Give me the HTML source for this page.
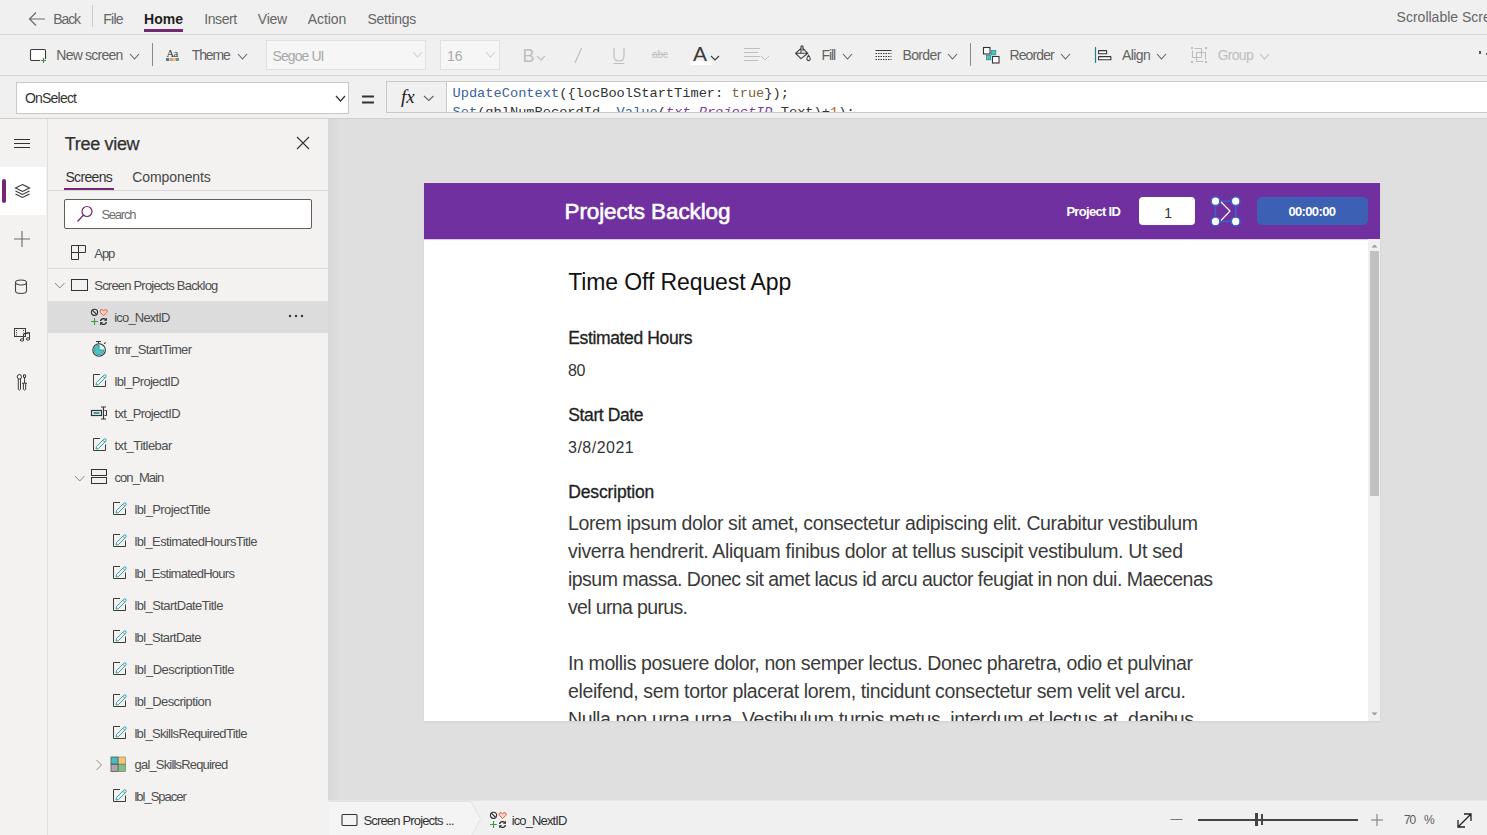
<!DOCTYPE html><html><head><meta charset="utf-8"><style>
html,body{margin:0;padding:0;width:1487px;height:835px;overflow:hidden;background:#f0f0f0;font-family:'Liberation Sans',sans-serif;}
</style></head><body><div style="position:absolute;left:0px;top:0px;width:1487px;height:34px;background:#f0f0f0;"></div>
<div style="position:absolute;left:0px;top:34px;width:1487px;height:1px;background:#d9d9d9;"></div>
<svg style="position:absolute;left:28px;top:11px;" width="18" height="16" viewBox="0 0 18 16"><path d="M1.5,8 H17 M8,1.5 L1.5,8 L8,14.5" fill="none" stroke="#6b6b6b" stroke-width="1.2"/></svg>
<div style="position:absolute;left:53.30px;top:12.30px;font-family:'Liberation Sans', sans-serif;font-size:14px;line-height:14px;color:#666666;font-weight:400;white-space:pre;letter-spacing:-1.142px;">Back</div>
<div style="position:absolute;left:92px;top:5px;width:1px;height:22px;background:#c8c8c8;"></div>
<div style="position:absolute;left:103.30px;top:12.30px;font-family:'Liberation Sans', sans-serif;font-size:14px;line-height:14px;color:#666666;font-weight:400;white-space:pre;letter-spacing:-0.788px;">File</div>
<div style="position:absolute;left:144.00px;top:12.30px;font-family:'Liberation Sans', sans-serif;font-size:14px;line-height:14px;color:#1f1f1f;font-weight:700;white-space:pre;letter-spacing:0.031px;">Home</div>
<div style="position:absolute;left:144px;top:29px;width:39px;height:3px;background:#742774;"></div>
<div style="position:absolute;left:204.20px;top:12.30px;font-family:'Liberation Sans', sans-serif;font-size:14px;line-height:14px;color:#666666;font-weight:400;white-space:pre;letter-spacing:-0.403px;">Insert</div>
<div style="position:absolute;left:257.80px;top:12.30px;font-family:'Liberation Sans', sans-serif;font-size:14px;line-height:14px;color:#666666;font-weight:400;white-space:pre;letter-spacing:-0.231px;">View</div>
<div style="position:absolute;left:307.80px;top:12.30px;font-family:'Liberation Sans', sans-serif;font-size:14px;line-height:14px;color:#666666;font-weight:400;white-space:pre;letter-spacing:-0.104px;">Action</div>
<div style="position:absolute;left:367.50px;top:12.30px;font-family:'Liberation Sans', sans-serif;font-size:14px;line-height:14px;color:#666666;font-weight:400;white-space:pre;letter-spacing:-0.256px;">Settings</div>
<div style="position:absolute;left:1396.60px;top:10.10px;font-family:'Liberation Sans', sans-serif;font-size:14px;line-height:14px;color:#666666;font-weight:400;white-space:pre;">Scrollable Screen</div>
<div style="position:absolute;left:0px;top:35px;width:1487px;height:40px;background:#f0f0f0;"></div>
<div style="position:absolute;left:0px;top:75px;width:1487px;height:1px;background:#d6d6d6;"></div>
<svg style="position:absolute;left:29px;top:48px;" width="19" height="17" viewBox="0 0 19 17"><rect x="1.5" y="1.5" width="15" height="11" rx="1.2" fill="#fff" stroke="#3a3a3a" stroke-width="1.1"/><path d="M14.5,9 V16 M11,12.5 H18" stroke="#f0f0f0" stroke-width="3"/><path d="M14.5,10 V15 M12,12.5 H17" stroke="#3d8f4d" stroke-width="1.1"/></svg>
<div style="position:absolute;left:56.30px;top:48.30px;font-family:'Liberation Sans', sans-serif;font-size:14px;line-height:14px;color:#626262;font-weight:400;white-space:pre;letter-spacing:-0.769px;">New screen</div>
<svg style="position:absolute;left:129px;top:53px;" width="11" height="7" viewBox="0 0 11 7"><polyline points="1,1 5.5,6 10,1" fill="none" stroke="#626262" stroke-width="1.1"/></svg>
<div style="position:absolute;left:152px;top:43px;width:1px;height:23px;background:#8a8a8a;"></div>
<svg style="position:absolute;left:165px;top:47px;" width="16" height="16" viewBox="0 0 16 16"><text x="1.5" y="9.6" font-family="Liberation Serif" font-size="10.5" fill="#333" letter-spacing="-0.6">Aa</text><rect x="1" y="11" width="3" height="3" fill="#4a78b0"/><rect x="4.6" y="11" width="3.2" height="3" fill="#e09a50"/><rect x="7.8" y="11" width="3" height="3" fill="#e8c090"/><rect x="10.8" y="11" width="3.2" height="3" fill="#6a9a80"/></svg>
<div style="position:absolute;left:191.80px;top:48.30px;font-family:'Liberation Sans', sans-serif;font-size:14px;line-height:14px;color:#626262;font-weight:400;white-space:pre;letter-spacing:-1.145px;">Theme</div>
<svg style="position:absolute;left:237px;top:53px;" width="11" height="7" viewBox="0 0 11 7"><polyline points="1,1 5.5,6 10,1" fill="none" stroke="#626262" stroke-width="1.1"/></svg>
<div style="position:absolute;left:266px;top:40px;width:160px;height:30px;background:#f6f6f6;box-sizing:border-box;border:1px solid #e0e0e0;"></div>
<div style="position:absolute;left:272.50px;top:49.10px;font-family:'Liberation Sans', sans-serif;font-size:14px;line-height:14px;color:#a8a8a8;font-weight:400;white-space:pre;letter-spacing:-0.911px;">Segoe UI</div>
<svg style="position:absolute;left:412px;top:51px;" width="11" height="7" viewBox="0 0 11 7"><polyline points="1,1 5.5,6 10,1" fill="none" stroke="#d0d0d0" stroke-width="1.1"/></svg>
<div style="position:absolute;left:440px;top:40px;width:60px;height:30px;background:#f6f6f6;box-sizing:border-box;border:1px solid #e0e0e0;"></div>
<div style="position:absolute;left:447.00px;top:49.10px;font-family:'Liberation Sans', sans-serif;font-size:14px;line-height:14px;color:#a8a8a8;font-weight:400;white-space:pre;">16</div>
<svg style="position:absolute;left:485px;top:51px;" width="11" height="7" viewBox="0 0 11 7"><polyline points="1,1 5.5,6 10,1" fill="none" stroke="#d0d0d0" stroke-width="1.1"/></svg>
<div style="position:absolute;left:522.50px;top:46.70px;font-family:'Liberation Sans', sans-serif;font-size:18px;line-height:18px;color:#bfbfbf;font-weight:400;white-space:pre;">B</div>
<svg style="position:absolute;left:535.5px;top:55px;" width="10" height="6" viewBox="0 0 10 6"><polyline points="1,1 5.0,5 9,1" fill="none" stroke="#bfbfbf" stroke-width="1.1"/></svg>
<svg style="position:absolute;left:573px;top:47px;" width="10" height="17" viewBox="0 0 10 17"><path d="M8.5,1 L2,16" stroke="#bfbfbf" stroke-width="1.2"/></svg>
<svg style="position:absolute;left:612px;top:47px;" width="14" height="18" viewBox="0 0 14 18"><path d="M2,1 V9 Q2,14 7,14 Q12,14 12,9 V1 M1.5,16.5 H12.5" fill="none" stroke="#bfbfbf" stroke-width="1.2"/></svg>
<svg style="position:absolute;left:651px;top:48px;" width="18" height="14" viewBox="0 0 18 14"><text x="1" y="10" font-family="Liberation Sans" font-size="10" fill="#bfbfbf">abc</text><path d="M0.5,6.5 H17" stroke="#bfbfbf" stroke-width="1"/></svg>
<div style="position:absolute;left:693.00px;top:43.15px;font-family:'Liberation Sans', sans-serif;font-size:21px;line-height:21px;color:#3a3a3a;font-weight:400;white-space:pre;">A</div>
<div style="position:absolute;left:690px;top:61px;width:22px;height:3.5px;background:#ffffff;"></div>
<svg style="position:absolute;left:710px;top:55px;" width="10" height="6" viewBox="0 0 10 6"><polyline points="1,1 5.0,5 9,1" fill="none" stroke="#3a3a3a" stroke-width="1.1"/></svg>
<svg style="position:absolute;left:743px;top:47px;" width="28" height="16" viewBox="0 0 28 16"><path d="M1,1.5 H17 M1,5.5 H15 M1,9.5 H17 M1,13.5 H15" stroke="#bfbfbf" stroke-width="1"/><polyline points="18,9 22,13 26,9" fill="none" stroke="#bfbfbf" stroke-width="1"/></svg>
<svg style="position:absolute;left:794px;top:44px;" width="20" height="18" viewBox="0 0 20 18"><path d="M7.5,3.8 L1.6,9.3 L7,14.6 L13.8,9.3 L9.2,4.6 M1.6,9.3 H13.8 M7,9.3 V2.6 Q8,0.8 9,2.6 V7" fill="none" stroke="#3a3a3a" stroke-width="1.1" stroke-linejoin="round"/><path d="M14.5,11.2 Q12.6,13.8 12.8,15 Q13.3,16.6 14.6,16.6 Q16,16.5 16.3,15 Q16.4,13.8 14.5,11.2 Z" fill="none" stroke="#3a3a3a" stroke-width="1.1"/></svg>
<div style="position:absolute;left:821.50px;top:48.30px;font-family:'Liberation Sans', sans-serif;font-size:14px;line-height:14px;color:#626262;font-weight:400;white-space:pre;letter-spacing:-1.130px;">Fill</div>
<svg style="position:absolute;left:842px;top:53px;" width="11" height="7" viewBox="0 0 11 7"><polyline points="1,1 5.5,6 10,1" fill="none" stroke="#626262" stroke-width="1.1"/></svg>
<svg style="position:absolute;left:875px;top:49px;" width="17" height="12" viewBox="0 0 17 12"><path d="M0.5,1.5 H16.5" stroke="#3a3a3a" stroke-width="1"/><path d="M0.5,4.5 H16.5 M0.5,7.5 H16.5 M0.5,10.5 H16.5" stroke="#3a3a3a" stroke-width="1.1" stroke-dasharray="1.5 1"/></svg>
<div style="position:absolute;left:902.50px;top:48.30px;font-family:'Liberation Sans', sans-serif;font-size:14px;line-height:14px;color:#626262;font-weight:400;white-space:pre;letter-spacing:-0.646px;">Border</div>
<svg style="position:absolute;left:947.4px;top:53px;" width="11" height="7" viewBox="0 0 11 7"><polyline points="1,1 5.5,6 10,1" fill="none" stroke="#626262" stroke-width="1.1"/></svg>
<div style="position:absolute;left:970px;top:43px;width:1px;height:23px;background:#8a8a8a;"></div>
<svg style="position:absolute;left:982px;top:46px;" width="18" height="18" viewBox="0 0 18 18"><rect x="1.5" y="1.5" width="6.5" height="6.5" fill="#fff" stroke="#333" stroke-width="1.1"/><rect x="9.3" y="4.4" width="4.5" height="4.4" fill="#45c4c4" stroke="#1f8f8f" stroke-width="0.7"/><rect x="4.4" y="9.3" width="4.4" height="4.5" fill="#45c4c4" stroke="#1f8f8f" stroke-width="0.7"/><rect x="10.5" y="10.5" width="6.5" height="6.5" fill="#fff" stroke="#333" stroke-width="1.1"/></svg>
<div style="position:absolute;left:1009.40px;top:48.30px;font-family:'Liberation Sans', sans-serif;font-size:14px;line-height:14px;color:#626262;font-weight:400;white-space:pre;letter-spacing:-0.866px;">Reorder</div>
<svg style="position:absolute;left:1060.4px;top:53px;" width="11" height="7" viewBox="0 0 11 7"><polyline points="1,1 5.5,6 10,1" fill="none" stroke="#626262" stroke-width="1.1"/></svg>
<svg style="position:absolute;left:1093px;top:46px;" width="19" height="18" viewBox="0 0 19 18"><path d="M2.5,1 V17" stroke="#2a8080" stroke-width="1.2"/><rect x="5.6" y="4.6" width="8" height="3.2" rx="0.4" fill="#fff" stroke="#333" stroke-width="1.1"/><rect x="5.6" y="10.6" width="12.3" height="3.2" rx="0.4" fill="#fff" stroke="#333" stroke-width="1.1"/></svg>
<div style="position:absolute;left:1121.90px;top:48.30px;font-family:'Liberation Sans', sans-serif;font-size:14px;line-height:14px;color:#626262;font-weight:400;white-space:pre;letter-spacing:-0.535px;">Align</div>
<svg style="position:absolute;left:1156px;top:53px;" width="11" height="7" viewBox="0 0 11 7"><polyline points="1,1 5.5,6 10,1" fill="none" stroke="#626262" stroke-width="1.1"/></svg>
<svg style="position:absolute;left:1190px;top:46px;" width="18" height="18" viewBox="0 0 18 18"><g fill="#bdbdbd"><rect x="1" y="1" width="2" height="2"/><rect x="15" y="1" width="2" height="2"/><rect x="1" y="15" width="2" height="2"/><rect x="15" y="15" width="2" height="2"/></g><path d="M4.5,2.5 H11.5 V11.5 H2.5 V4.5 M6.5,15.5 V6.5 H15.5 V13.5 M6.5,15.5 H13.5" fill="none" stroke="#bdbdbd" stroke-width="1"/></svg>
<div style="position:absolute;left:1217.70px;top:48.30px;font-family:'Liberation Sans', sans-serif;font-size:14px;line-height:14px;color:#bfbfbf;font-weight:400;white-space:pre;letter-spacing:-0.730px;">Group</div>
<svg style="position:absolute;left:1259px;top:53px;" width="11" height="7" viewBox="0 0 11 7"><polyline points="1,1 5.5,6 10,1" fill="none" stroke="#bfbfbf" stroke-width="1.1"/></svg>
<div style="position:absolute;left:1479px;top:51px;width:1.5px;height:3px;background:#555;"></div>
<div style="position:absolute;left:1485.5px;top:53px;width:1.5px;height:2px;background:#555;"></div>
<div style="position:absolute;left:0px;top:76px;width:1487px;height:42px;background:#f0f0f0;"></div>
<div style="position:absolute;left:0px;top:118px;width:1487px;height:1px;background:#d0d0d0;"></div>
<div style="position:absolute;left:16px;top:82px;width:333px;height:32px;background:#ffffff;box-sizing:border-box;border:1px solid #c8c8c8;"></div>
<div style="position:absolute;left:25.00px;top:91.10px;font-family:'Liberation Sans', sans-serif;font-size:14px;line-height:14px;color:#333333;font-weight:400;white-space:pre;letter-spacing:-0.799px;">OnSelect</div>
<svg style="position:absolute;left:335px;top:94.5px;" width="11" height="7" viewBox="0 0 11 7"><polyline points="1,1 5.5,6 10,1" fill="none" stroke="#333333" stroke-width="1.2"/></svg>
<svg style="position:absolute;left:361px;top:95px;" width="14" height="9" viewBox="0 0 14 9"><path d="M1,1.5 H13 M1,7.5 H13" stroke="#333" stroke-width="2"/></svg>
<div style="position:absolute;left:386px;top:81px;width:61px;height:32px;background:#f0f0f0;box-sizing:border-box;border:1px solid #c8c8c8;"></div>
<div style="position:absolute;left:401.00px;top:86.85px;font-family:'Liberation Serif', serif;font-size:19px;line-height:19px;color:#222222;font-weight:400;white-space:pre;font-style:italic;">fx</div>
<svg style="position:absolute;left:423px;top:94.5px;" width="11.5" height="6.5" viewBox="0 0 11.5 6.5"><polyline points="1,1 5.75,5.5 10.5,1" fill="none" stroke="#666666" stroke-width="1.1"/></svg>
<div style="position:absolute;left:446px;top:81px;width:1041px;height:32px;background:#ffffff;box-sizing:border-box;border:1px solid #c8c8c8;border-right:none;overflow:hidden;"></div>
<div style="position:absolute;left:452.50px;top:86.80px;font-family:'Liberation Mono', monospace;font-size:13.68px;line-height:13.68px;color:#333;font-weight:400;white-space:pre;"><span style="color:#3b5f9c">UpdateContext</span><span style="color:#333">({locBoolStartTimer: </span><span style="color:#7a6540">true</span><span style="color:#333">});</span></div>
<div style="position:absolute;left:447px;top:82px;width:1040px;height:30px;overflow:hidden">
<div style="position:absolute;left:5.5px;top:23.80px;font-family:'Liberation Mono',monospace;font-size:13.68px;line-height:13.68px;white-space:pre"><span style="color:#3b5f9c">Set</span><span style="color:#333">(gblNumRecordId, </span><span style="color:#3b5f9c">Value</span><span style="color:#333">(</span><span style="color:#7b3c9c;font-style:italic">txt_ProjectID</span><span style="color:#333">.Text)+</span><span style="color:#b5651d">1</span><span style="color:#333">);</span></div>
</div>
<div style="position:absolute;left:0px;top:119px;width:47px;height:716px;background:#f3f2f1;"></div>
<div style="position:absolute;left:47px;top:119px;width:1px;height:716px;background:#e1dfdd;"></div>
<svg style="position:absolute;left:13px;top:137px;" width="18" height="12" viewBox="0 0 18 12"><path d="M1,2.5 H17 M1,6.5 H17 M1,10.5 H17" stroke="#333" stroke-width="1"/></svg>
<div style="position:absolute;left:0px;top:167px;width:46px;height:48px;background:#ffffff;"></div>
<div style="position:absolute;left:2px;top:179px;width:4px;height:24px;background:#742774;border-radius:2px;"></div>
<svg style="position:absolute;left:14px;top:183px;" width="17" height="17" viewBox="0 0 17 17"><path d="M8.5,1.5 L15.5,5 L8.5,8.5 L1.5,5 Z" fill="none" stroke="#333" stroke-width="1.1"/><path d="M1.5,8 L8.5,11.5 L15.5,8" fill="none" stroke="#333" stroke-width="1.1"/><path d="M1.5,11 L8.5,14.5 L15.5,11" fill="none" stroke="#333" stroke-width="1.1"/></svg>
<svg style="position:absolute;left:13px;top:230px;" width="18" height="18" viewBox="0 0 18 18"><path d="M9,1 V17 M1,9 H17" stroke="#6a6a6a" stroke-width="1.1"/></svg>
<svg style="position:absolute;left:14px;top:279px;" width="14" height="16" viewBox="0 0 14 16"><ellipse cx="7" cy="3.5" rx="5.5" ry="2.5" fill="none" stroke="#444" stroke-width="1.1"/><path d="M1.5,3.5 V12 Q1.5,14.5 7,14.5 Q12.5,14.5 12.5,12 V3.5" fill="none" stroke="#444" stroke-width="1.1"/></svg>
<svg style="position:absolute;left:13px;top:326px;" width="20" height="18" viewBox="0 0 20 18"><rect x="1.5" y="2.5" width="11" height="8" fill="none" stroke="#3a3a3a" stroke-width="1"/><path d="M3.5,4 V9.5 M10.5,4 V6.5" stroke="#3a3a3a" stroke-width="1" stroke-dasharray="1 1.2"/><path d="M10.5,8 V13.8 M16.5,6.5 V12.8" stroke="#3a3a3a" stroke-width="1"/><path d="M10.5,8 L16.5,6.5" stroke="#3a3a3a" stroke-width="1.4"/><ellipse cx="9" cy="14" rx="1.7" ry="1.2" fill="none" stroke="#3a3a3a" stroke-width="1"/><ellipse cx="15" cy="13" rx="1.7" ry="1.2" fill="none" stroke="#3a3a3a" stroke-width="1"/></svg>
<svg style="position:absolute;left:16px;top:373px;" width="12" height="19" viewBox="0 0 12 19"><circle cx="3.4" cy="3.8" r="2.2" fill="none" stroke="#3a3a3a" stroke-width="1"/><path d="M2.3,6 V16.3 Q3.4,18 4.5,16.3 V6" fill="none" stroke="#3a3a3a" stroke-width="1"/><path d="M7.5,1.8 H9.6 V4.4 H7.5 Z M8.55,4.4 V10 M6,10.2 H11 M7.4,10.2 V16.3 Q8.55,18 9.7,16.3 V10.2" fill="none" stroke="#3a3a3a" stroke-width="1"/></svg>
<div style="position:absolute;left:48px;top:119px;width:280px;height:716px;background:#f3f2f1;"></div>
<div style="position:absolute;left:64.80px;top:134.90px;font-family:'Liberation Sans', sans-serif;font-size:18px;line-height:18px;color:#323130;font-weight:400;white-space:pre;letter-spacing:-0.320px;-webkit-text-stroke:0.25px #323130;">Tree view</div>
<svg style="position:absolute;left:296px;top:136px;" width="14" height="14" viewBox="0 0 14 14"><path d="M1,1 L13,13 M13,1 L1,13" stroke="#333" stroke-width="1.1"/></svg>
<div style="position:absolute;left:65.40px;top:170.40px;font-family:'Liberation Sans', sans-serif;font-size:14px;line-height:14px;color:#323130;font-weight:400;white-space:pre;letter-spacing:-0.660px;">Screens</div>
<div style="position:absolute;left:132.20px;top:170.40px;font-family:'Liberation Sans', sans-serif;font-size:14px;line-height:14px;color:#484644;font-weight:400;white-space:pre;letter-spacing:-0.077px;">Components</div>
<div style="position:absolute;left:64px;top:188px;width:50px;height:2px;background:#742774;"></div>
<div style="position:absolute;left:48px;top:190px;width:280px;height:1px;background:#dcdad8;"></div>
<div style="position:absolute;left:64px;top:199px;width:248px;height:30px;background:#ffffff;box-sizing:border-box;border:1px solid #605e5c;border-radius:2px;"></div>
<svg style="position:absolute;left:76px;top:205px;" width="18" height="18" viewBox="0 0 18 18"><circle cx="11" cy="6.5" r="5" fill="none" stroke="#742774" stroke-width="1.2"/><path d="M7.5,10 L1.5,16.5" stroke="#742774" stroke-width="1.2"/></svg>
<div style="position:absolute;left:101.40px;top:208.05px;font-family:'Liberation Sans', sans-serif;font-size:13px;line-height:13px;color:#6e6e6e;font-weight:400;white-space:pre;letter-spacing:-1.241px;">Search</div>
<svg style="position:absolute;left:71px;top:245px;" width="17" height="16" viewBox="0 0 17 16"><path d="M0.5,0.5 H14.5 V7.5 H7.5 V14.5 H0.5 Z M0.5,7.5 H7.5 M7.5,0.5 V7.5" fill="none" stroke="#333" stroke-width="1"/></svg>
<div style="position:absolute;left:94.30px;top:246.95px;font-family:'Liberation Sans', sans-serif;font-size:13px;line-height:13px;color:#4e4e4e;font-weight:400;white-space:pre;letter-spacing:-1.070px;">App</div>
<div style="position:absolute;left:48px;top:268px;width:280px;height:1px;background:#dcdad8;"></div>
<svg style="position:absolute;left:54px;top:282px;" width="11.5" height="7" viewBox="0 0 11.5 7"><polyline points="1,1 5.75,6 10.5,1" fill="none" stroke="#8a8886" stroke-width="1"/></svg>
<svg style="position:absolute;left:71px;top:278px;" width="18" height="14" viewBox="0 0 18 14"><rect x="0.5" y="1.5" width="16" height="11" fill="none" stroke="#333" stroke-width="1"/></svg>
<div style="position:absolute;left:94.30px;top:279.45px;font-family:'Liberation Sans', sans-serif;font-size:13px;line-height:13px;color:#4e4e4e;font-weight:400;white-space:pre;letter-spacing:-0.801px;">Screen Projects Backlog</div>
<div style="position:absolute;left:48px;top:301px;width:280px;height:32px;background:#dcdcdc;"></div>
<svg style="position:absolute;left:88px;top:306px;" width="22" height="22" viewBox="0 0 22 22"><circle cx="6.5" cy="6.3" r="3.1" fill="none" stroke="#333" stroke-width="1.1"/><path d="M4.3,4.1 L8.7,8.5" stroke="#333" stroke-width="1.1"/><path d="M15.6,9.6 L12.6,6.6 Q11.3,5 12.6,3.9 Q14.1,3 15.6,4.6 Q17.1,3 18.6,3.9 Q19.9,5 18.6,6.6 Z" fill="#f8d2c2" stroke="#e0603e" stroke-width="1"/><path d="M6.5,12 V19 M3.1,15.5 H9.9" stroke="#3a9a4a" stroke-width="1.1"/><path d="M12.6,15 Q13,12.6 15.5,12.6 Q16.8,12.6 17.6,13.4 M18.4,16 Q18,18.4 15.5,18.4 Q14.2,18.4 13.4,17.6" fill="none" stroke="#222" stroke-width="1.3"/><path d="M18.9,11.8 V14.8 H15.9 Z M12.1,19.2 V16.2 H15.1 Z" fill="#222"/></svg>
<div style="position:absolute;left:114.20px;top:311.25px;font-family:'Liberation Sans', sans-serif;font-size:13px;line-height:13px;color:#4e4e4e;font-weight:400;white-space:pre;letter-spacing:-0.809px;">ico_NextID</div>
<svg style="position:absolute;left:288px;top:314px;" width="17" height="4" viewBox="0 0 17 4"><circle cx="2" cy="2" r="1.2" fill="#333"/><circle cx="8" cy="2" r="1.2" fill="#333"/><circle cx="14" cy="2" r="1.2" fill="#333"/></svg>
<svg style="position:absolute;left:90px;top:338px;" width="18" height="20" viewBox="0 0 18 20"><path d="M6,3.5 H11 M8.5,3.5 V5.5 M14.2,5.8 L15.6,4.4" stroke="#333" stroke-width="1.1"/><circle cx="9.1" cy="12" r="6.3" fill="#dcf4f4" stroke="#333" stroke-width="1.1"/><path d="M9.1,12 V7.2 A4.8,4.8 0 1 0 13.9,12 Z" fill="#4cc4c4" stroke="#2a9696" stroke-width="0.9"/></svg>
<div style="position:absolute;left:114.50px;top:343.25px;font-family:'Liberation Sans', sans-serif;font-size:13px;line-height:13px;color:#4e4e4e;font-weight:400;white-space:pre;letter-spacing:-0.669px;">tmr_StartTimer</div>
<svg style="position:absolute;left:93px;top:374px;" width="15" height="15" viewBox="0 0 15 15"><path d="M12.5,6.5 V12.5 H0.5 V0.5 H7" fill="none" stroke="#3a3a3a" stroke-width="1"/><path d="M3,11 L3.5,8.5 L10.8,1.2 Q11.8,0.3 12.8,1.2 Q13.7,2.2 12.8,3.2 L5.5,10.5 Z M9.8,2.2 L11.8,4.2" fill="none" stroke="#2ea3a3" stroke-width="1"/></svg>
<div style="position:absolute;left:114.50px;top:375.25px;font-family:'Liberation Sans', sans-serif;font-size:13px;line-height:13px;color:#4e4e4e;font-weight:400;white-space:pre;letter-spacing:-0.717px;">lbl_ProjectID</div>
<svg style="position:absolute;left:90px;top:406px;" width="18" height="14" viewBox="0 0 18 14"><rect x="1.5" y="4.5" width="10" height="5" fill="none" stroke="#333" stroke-width="1.2"/><rect x="3.5" y="6" width="6" height="2" fill="#2aa6a6"/><path d="M11,1 H16 M13.5,1 V13 M11,13 H16" fill="none" stroke="#333" stroke-width="1.1"/><path d="M14.5,4.5 H16.5 V9.5 H14.5" fill="none" stroke="#333" stroke-width="1"/></svg>
<div style="position:absolute;left:114.50px;top:407.25px;font-family:'Liberation Sans', sans-serif;font-size:13px;line-height:13px;color:#4e4e4e;font-weight:400;white-space:pre;letter-spacing:-0.693px;">txt_ProjectID</div>
<svg style="position:absolute;left:93px;top:438px;" width="15" height="15" viewBox="0 0 15 15"><path d="M12.5,6.5 V12.5 H0.5 V0.5 H7" fill="none" stroke="#3a3a3a" stroke-width="1"/><path d="M3,11 L3.5,8.5 L10.8,1.2 Q11.8,0.3 12.8,1.2 Q13.7,2.2 12.8,3.2 L5.5,10.5 Z M9.8,2.2 L11.8,4.2" fill="none" stroke="#2ea3a3" stroke-width="1"/></svg>
<div style="position:absolute;left:114.50px;top:439.25px;font-family:'Liberation Sans', sans-serif;font-size:13px;line-height:13px;color:#4e4e4e;font-weight:400;white-space:pre;letter-spacing:-0.548px;">txt_Titlebar</div>
<svg style="position:absolute;left:74.4px;top:474.5px;" width="11.5" height="7" viewBox="0 0 11.5 7"><polyline points="1,1 5.75,6 10.5,1" fill="none" stroke="#8a8886" stroke-width="1"/></svg>
<svg style="position:absolute;left:90px;top:468px;" width="18" height="18" viewBox="0 0 18 18"><rect x="1.5" y="1.5" width="15" height="6" fill="none" stroke="#333" stroke-width="1"/><rect x="1.5" y="9.5" width="15" height="6" fill="none" stroke="#333" stroke-width="1"/></svg>
<div style="position:absolute;left:114.50px;top:471.25px;font-family:'Liberation Sans', sans-serif;font-size:13px;line-height:13px;color:#4e4e4e;font-weight:400;white-space:pre;letter-spacing:-0.939px;">con_Main</div>
<svg style="position:absolute;left:113px;top:502px;" width="15" height="15" viewBox="0 0 15 15"><path d="M12.5,6.5 V12.5 H0.5 V0.5 H7" fill="none" stroke="#3a3a3a" stroke-width="1"/><path d="M3,11 L3.5,8.5 L10.8,1.2 Q11.8,0.3 12.8,1.2 Q13.7,2.2 12.8,3.2 L5.5,10.5 Z M9.8,2.2 L11.8,4.2" fill="none" stroke="#2ea3a3" stroke-width="1"/></svg>
<div style="position:absolute;left:134.40px;top:502.65px;font-family:'Liberation Sans', sans-serif;font-size:13px;line-height:13px;color:#4e4e4e;font-weight:400;white-space:pre;letter-spacing:-0.585px;">lbl_ProjectTitle</div>
<svg style="position:absolute;left:113px;top:534px;" width="15" height="15" viewBox="0 0 15 15"><path d="M12.5,6.5 V12.5 H0.5 V0.5 H7" fill="none" stroke="#3a3a3a" stroke-width="1"/><path d="M3,11 L3.5,8.5 L10.8,1.2 Q11.8,0.3 12.8,1.2 Q13.7,2.2 12.8,3.2 L5.5,10.5 Z M9.8,2.2 L11.8,4.2" fill="none" stroke="#2ea3a3" stroke-width="1"/></svg>
<div style="position:absolute;left:134.40px;top:534.65px;font-family:'Liberation Sans', sans-serif;font-size:13px;line-height:13px;color:#4e4e4e;font-weight:400;white-space:pre;letter-spacing:-0.627px;">lbl_EstimatedHoursTitle</div>
<svg style="position:absolute;left:113px;top:566px;" width="15" height="15" viewBox="0 0 15 15"><path d="M12.5,6.5 V12.5 H0.5 V0.5 H7" fill="none" stroke="#3a3a3a" stroke-width="1"/><path d="M3,11 L3.5,8.5 L10.8,1.2 Q11.8,0.3 12.8,1.2 Q13.7,2.2 12.8,3.2 L5.5,10.5 Z M9.8,2.2 L11.8,4.2" fill="none" stroke="#2ea3a3" stroke-width="1"/></svg>
<div style="position:absolute;left:134.40px;top:566.65px;font-family:'Liberation Sans', sans-serif;font-size:13px;line-height:13px;color:#4e4e4e;font-weight:400;white-space:pre;letter-spacing:-0.713px;">lbl_EstimatedHours</div>
<svg style="position:absolute;left:113px;top:598px;" width="15" height="15" viewBox="0 0 15 15"><path d="M12.5,6.5 V12.5 H0.5 V0.5 H7" fill="none" stroke="#3a3a3a" stroke-width="1"/><path d="M3,11 L3.5,8.5 L10.8,1.2 Q11.8,0.3 12.8,1.2 Q13.7,2.2 12.8,3.2 L5.5,10.5 Z M9.8,2.2 L11.8,4.2" fill="none" stroke="#2ea3a3" stroke-width="1"/></svg>
<div style="position:absolute;left:134.40px;top:598.65px;font-family:'Liberation Sans', sans-serif;font-size:13px;line-height:13px;color:#4e4e4e;font-weight:400;white-space:pre;letter-spacing:-0.602px;">lbl_StartDateTitle</div>
<svg style="position:absolute;left:113px;top:630px;" width="15" height="15" viewBox="0 0 15 15"><path d="M12.5,6.5 V12.5 H0.5 V0.5 H7" fill="none" stroke="#3a3a3a" stroke-width="1"/><path d="M3,11 L3.5,8.5 L10.8,1.2 Q11.8,0.3 12.8,1.2 Q13.7,2.2 12.8,3.2 L5.5,10.5 Z M9.8,2.2 L11.8,4.2" fill="none" stroke="#2ea3a3" stroke-width="1"/></svg>
<div style="position:absolute;left:134.40px;top:630.65px;font-family:'Liberation Sans', sans-serif;font-size:13px;line-height:13px;color:#4e4e4e;font-weight:400;white-space:pre;letter-spacing:-0.680px;">lbl_StartDate</div>
<svg style="position:absolute;left:113px;top:662px;" width="15" height="15" viewBox="0 0 15 15"><path d="M12.5,6.5 V12.5 H0.5 V0.5 H7" fill="none" stroke="#3a3a3a" stroke-width="1"/><path d="M3,11 L3.5,8.5 L10.8,1.2 Q11.8,0.3 12.8,1.2 Q13.7,2.2 12.8,3.2 L5.5,10.5 Z M9.8,2.2 L11.8,4.2" fill="none" stroke="#2ea3a3" stroke-width="1"/></svg>
<div style="position:absolute;left:134.40px;top:662.65px;font-family:'Liberation Sans', sans-serif;font-size:13px;line-height:13px;color:#4e4e4e;font-weight:400;white-space:pre;letter-spacing:-0.492px;">lbl_DescriptionTitle</div>
<svg style="position:absolute;left:113px;top:694px;" width="15" height="15" viewBox="0 0 15 15"><path d="M12.5,6.5 V12.5 H0.5 V0.5 H7" fill="none" stroke="#3a3a3a" stroke-width="1"/><path d="M3,11 L3.5,8.5 L10.8,1.2 Q11.8,0.3 12.8,1.2 Q13.7,2.2 12.8,3.2 L5.5,10.5 Z M9.8,2.2 L11.8,4.2" fill="none" stroke="#2ea3a3" stroke-width="1"/></svg>
<div style="position:absolute;left:134.40px;top:694.65px;font-family:'Liberation Sans', sans-serif;font-size:13px;line-height:13px;color:#4e4e4e;font-weight:400;white-space:pre;letter-spacing:-0.590px;">lbl_Description</div>
<svg style="position:absolute;left:113px;top:726px;" width="15" height="15" viewBox="0 0 15 15"><path d="M12.5,6.5 V12.5 H0.5 V0.5 H7" fill="none" stroke="#3a3a3a" stroke-width="1"/><path d="M3,11 L3.5,8.5 L10.8,1.2 Q11.8,0.3 12.8,1.2 Q13.7,2.2 12.8,3.2 L5.5,10.5 Z M9.8,2.2 L11.8,4.2" fill="none" stroke="#2ea3a3" stroke-width="1"/></svg>
<div style="position:absolute;left:134.40px;top:726.65px;font-family:'Liberation Sans', sans-serif;font-size:13px;line-height:13px;color:#4e4e4e;font-weight:400;white-space:pre;letter-spacing:-0.655px;">lbl_SkillsRequiredTitle</div>
<svg style="position:absolute;left:95px;top:759px;" width="8" height="12" viewBox="0 0 8 12"><polyline points="1.5,1 6.5,6 1.5,11" fill="none" stroke="#8a8886" stroke-width="1"/></svg>
<svg style="position:absolute;left:110px;top:756px;" width="17" height="17" viewBox="0 0 17 17"><rect x="1" y="1" width="7" height="7" fill="#48bcc4" stroke="#555" stroke-width="0.8"/><rect x="8.5" y="1" width="7" height="7" fill="#f5c66e" stroke="#777" stroke-width="0.6"/><rect x="1" y="8.5" width="7" height="7" fill="#a8a8a8" stroke="#555" stroke-width="0.8"/><rect x="8.5" y="8.5" width="7" height="7" fill="#7cc47f" stroke="#666" stroke-width="0.6"/></svg>
<div style="position:absolute;left:134.60px;top:758.25px;font-family:'Liberation Sans', sans-serif;font-size:13px;line-height:13px;color:#4e4e4e;font-weight:400;white-space:pre;letter-spacing:-0.828px;">gal_SkillsRequired</div>
<svg style="position:absolute;left:113px;top:789px;" width="15" height="15" viewBox="0 0 15 15"><path d="M12.5,6.5 V12.5 H0.5 V0.5 H7" fill="none" stroke="#3a3a3a" stroke-width="1"/><path d="M3,11 L3.5,8.5 L10.8,1.2 Q11.8,0.3 12.8,1.2 Q13.7,2.2 12.8,3.2 L5.5,10.5 Z M9.8,2.2 L11.8,4.2" fill="none" stroke="#2ea3a3" stroke-width="1"/></svg>
<div style="position:absolute;left:134.40px;top:790.45px;font-family:'Liberation Sans', sans-serif;font-size:13px;line-height:13px;color:#4e4e4e;font-weight:400;white-space:pre;letter-spacing:-0.993px;">lbl_Spacer</div>
<div style="position:absolute;left:328px;top:119px;width:1159px;height:681px;background:#dfdfdf;"></div>
<div style="position:absolute;left:328px;top:119px;width:12px;height:681px;background:linear-gradient(to right, rgba(0,0,0,0.035), rgba(0,0,0,0));"></div>
<div style="position:absolute;left:424px;top:183px;width:956px;height:538px;background:#ffffff;box-shadow:0 1px 2px rgba(0,0,0,0.07);"></div>
<div style="position:absolute;left:424px;top:183px;width:956px;height:56px;background:#7030a0;"></div>
<div style="position:absolute;left:424px;top:182px;width:956px;height:1px;background:#e9def2;"></div>
<div style="position:absolute;left:424px;top:239px;width:956px;height:1px;background:#dcc8ea;"></div>
<div style="position:absolute;left:564.50px;top:200.78px;font-family:'Liberation Sans', sans-serif;font-size:22.5px;line-height:22.5px;color:#ffffff;font-weight:400;white-space:pre;letter-spacing:-0.105px;-webkit-text-stroke:0.6px #fff;">Projects Backlog</div>
<div style="position:absolute;left:1066.40px;top:204.75px;font-family:'Liberation Sans', sans-serif;font-size:13px;line-height:13px;color:#ffffff;font-weight:700;white-space:pre;letter-spacing:-0.688px;">Project ID</div>
<div style="position:absolute;left:1139px;top:197px;width:56px;height:28px;background:#ffffff;border-radius:4px;"></div>
<div style="position:absolute;left:1164.30px;top:205.90px;font-family:'Liberation Sans', sans-serif;font-size:14px;line-height:14px;color:#333333;font-weight:400;white-space:pre;">1</div>
<svg style="position:absolute;left:1208px;top:193px;" width="36" height="36" viewBox="0 0 36 36"><rect x="7.5" y="8.2" width="20.2" height="20.2" fill="none" stroke="#3b63c9" stroke-width="1.6"/><polyline points="13,9 22,18 13,27.5" fill="none" stroke="#ffffff" stroke-width="1.2"/><g fill="#ffffff" stroke="#3b63c9" stroke-width="1.4"><circle cx="7.5" cy="8.2" r="4.3"/><circle cx="27.7" cy="8.2" r="4.3"/><circle cx="7.5" cy="28.4" r="4.3"/><circle cx="27.7" cy="28.4" r="4.3"/></g></svg>
<div style="position:absolute;left:1257px;top:197px;width:111px;height:28px;background:#3b60b4;border-radius:5px;"></div>
<div style="position:absolute;left:1288.40px;top:204.95px;font-family:'Liberation Sans', sans-serif;font-size:13px;line-height:13px;color:#ffffff;font-weight:700;white-space:pre;letter-spacing:-0.635px;">00:00:00</div>
<div style="position:absolute;left:1368px;top:239px;width:12px;height:482px;background:#f0f0f0;"></div>
<div style="position:absolute;left:1370px;top:251px;width:9px;height:245px;background:#c1c1c1;"></div>
<svg style="position:absolute;left:1371px;top:244px;" width="7" height="4" viewBox="0 0 7 4"><polygon points="0.5,3.5 3.5,0.5 6.5,3.5" fill="#9a9a9a"/></svg>
<svg style="position:absolute;left:1371px;top:712px;" width="7" height="4" viewBox="0 0 7 4"><polygon points="0.5,0.5 3.5,3.5 6.5,0.5" fill="#9a9a9a"/></svg>
<div style="position:absolute;left:568.20px;top:270.75px;font-family:'Liberation Sans', sans-serif;font-size:23px;line-height:23px;color:#111111;font-weight:400;white-space:pre;letter-spacing:-0.106px;">Time Off Request App</div>
<div style="position:absolute;left:568.30px;top:329.52px;font-family:'Liberation Sans', sans-serif;font-size:17.5px;line-height:17.5px;color:#1e1e1e;font-weight:400;white-space:pre;letter-spacing:-0.369px;-webkit-text-stroke:0.3px #1e1e1e;">Estimated Hours</div>
<div style="position:absolute;left:568.00px;top:362.50px;font-family:'Liberation Sans', sans-serif;font-size:16px;line-height:16px;color:#333333;font-weight:400;white-space:pre;letter-spacing:-0.497px;">80</div>
<div style="position:absolute;left:568.30px;top:406.52px;font-family:'Liberation Sans', sans-serif;font-size:17.5px;line-height:17.5px;color:#1e1e1e;font-weight:400;white-space:pre;letter-spacing:-0.389px;-webkit-text-stroke:0.3px #1e1e1e;">Start Date</div>
<div style="position:absolute;left:568.00px;top:439.70px;font-family:'Liberation Sans', sans-serif;font-size:16px;line-height:16px;color:#333333;font-weight:400;white-space:pre;letter-spacing:0.488px;">3/8/2021</div>
<div style="position:absolute;left:568.30px;top:483.82px;font-family:'Liberation Sans', sans-serif;font-size:17.5px;line-height:17.5px;color:#1e1e1e;font-weight:400;white-space:pre;letter-spacing:-0.155px;-webkit-text-stroke:0.3px #1e1e1e;">Description</div>
<div style="position:absolute;left:424px;top:239px;width:944px;height:482px;overflow:hidden">
<div style="position:absolute;left:144.00px;top:275.13px;font-family:'Liberation Sans', sans-serif;font-size:19.5px;line-height:19.5px;color:#3a3a3a;font-weight:400;white-space:pre;letter-spacing:-0.381px;">Lorem ipsum dolor sit amet, consectetur adipiscing elit. Curabitur vestibulum</div>
<div style="position:absolute;left:144.00px;top:303.22px;font-family:'Liberation Sans', sans-serif;font-size:19.5px;line-height:19.5px;color:#3a3a3a;font-weight:400;white-space:pre;letter-spacing:-0.332px;">viverra hendrerit. Aliquam finibus dolor at tellus suscipit vestibulum. Ut sed</div>
<div style="position:absolute;left:144.00px;top:330.63px;font-family:'Liberation Sans', sans-serif;font-size:19.5px;line-height:19.5px;color:#3a3a3a;font-weight:400;white-space:pre;letter-spacing:-0.527px;">ipsum massa. Donec sit amet lacus id arcu auctor feugiat in non dui. Maecenas</div>
<div style="position:absolute;left:144.00px;top:358.63px;font-family:'Liberation Sans', sans-serif;font-size:19.5px;line-height:19.5px;color:#3a3a3a;font-weight:400;white-space:pre;letter-spacing:-0.643px;">vel urna purus.</div>
<div style="position:absolute;left:144.00px;top:414.63px;font-family:'Liberation Sans', sans-serif;font-size:19.5px;line-height:19.5px;color:#3a3a3a;font-weight:400;white-space:pre;letter-spacing:-0.382px;">In mollis posuere dolor, non semper lectus. Donec pharetra, odio et pulvinar</div>
<div style="position:absolute;left:144.00px;top:442.63px;font-family:'Liberation Sans', sans-serif;font-size:19.5px;line-height:19.5px;color:#3a3a3a;font-weight:400;white-space:pre;letter-spacing:-0.377px;">eleifend, sem tortor placerat lorem, tincidunt consectetur sem velit vel arcu.</div>
<div style="position:absolute;left:144.00px;top:470.82px;font-family:'Liberation Sans', sans-serif;font-size:19.5px;line-height:19.5px;color:#3a3a3a;font-weight:400;white-space:pre;letter-spacing:-0.383px;">Nulla non urna urna. Vestibulum turpis metus, interdum et lectus at, dapibus</div>
</div>
<div style="position:absolute;left:328px;top:800px;width:1159px;height:35px;background:#f0f0f0;"></div>
<div style="position:absolute;left:328px;top:800px;width:1159px;height:1px;background:#e6e6e6;"></div>
<svg style="position:absolute;left:329px;top:800px;" width="155" height="35" viewBox="0 0 155 35"><path d="M-0.5,1.5 H142 L151.5,19 L142,36 H-0.5 Z" fill="#f4f4f4" stroke="#e2e2e2" stroke-width="1"/></svg>
<svg style="position:absolute;left:341px;top:813px;" width="18" height="15" viewBox="0 0 18 15"><rect x="1" y="1.5" width="15" height="11" rx="1" fill="none" stroke="#333" stroke-width="1.1"/></svg>
<div style="position:absolute;left:363.40px;top:813.65px;font-family:'Liberation Sans', sans-serif;font-size:13px;line-height:13px;color:#333333;font-weight:400;white-space:pre;letter-spacing:-0.829px;">Screen Projects ...</div>
<svg style="position:absolute;left:487px;top:809px;" width="22" height="22" viewBox="0 0 22 22"><circle cx="6.5" cy="6.3" r="3.1" fill="none" stroke="#333" stroke-width="1.1"/><path d="M4.3,4.1 L8.7,8.5" stroke="#333" stroke-width="1.1"/><path d="M15.6,9.6 L12.6,6.6 Q11.3,5 12.6,3.9 Q14.1,3 15.6,4.6 Q17.1,3 18.6,3.9 Q19.9,5 18.6,6.6 Z" fill="#f8d2c2" stroke="#e0603e" stroke-width="1"/><path d="M6.5,12 V19 M3.1,15.5 H9.9" stroke="#3a9a4a" stroke-width="1.1"/><path d="M12.6,15 Q13,12.6 15.5,12.6 Q16.8,12.6 17.6,13.4 M18.4,16 Q18,18.4 15.5,18.4 Q14.2,18.4 13.4,17.6" fill="none" stroke="#222" stroke-width="1.3"/><path d="M18.9,11.8 V14.8 H15.9 Z M12.1,19.2 V16.2 H15.1 Z" fill="#222"/></svg>
<div style="position:absolute;left:511.70px;top:813.65px;font-family:'Liberation Sans', sans-serif;font-size:13px;line-height:13px;color:#333333;font-weight:400;white-space:pre;letter-spacing:-0.875px;">ico_NextID</div>
<svg style="position:absolute;left:1170px;top:818px;" width="13" height="3" viewBox="0 0 13 3"><path d="M0.5,1.5 H12.5" stroke="#777" stroke-width="1"/></svg>
<div style="position:absolute;left:1198px;top:819px;width:160px;height:2px;background:#444444;"></div>
<div style="position:absolute;left:1255px;top:812.5px;width:3px;height:13px;background:#444444;"></div>
<div style="position:absolute;left:1261px;top:814px;width:2px;height:11px;background:#444444;"></div>
<svg style="position:absolute;left:1370px;top:813px;" width="14" height="14" viewBox="0 0 14 14"><path d="M7,1 V13 M1,7 H13" stroke="#777" stroke-width="1"/></svg>
<div style="position:absolute;left:1404.00px;top:814.00px;font-family:'Liberation Sans', sans-serif;font-size:12px;line-height:12px;color:#5c5c5c;font-weight:400;white-space:pre;letter-spacing:-1.159px;">70</div>
<div style="position:absolute;left:1424.00px;top:814.00px;font-family:'Liberation Sans', sans-serif;font-size:12px;line-height:12px;color:#5c5c5c;font-weight:400;white-space:pre;">%</div>
<svg style="position:absolute;left:1456px;top:812px;" width="17" height="17" viewBox="0 0 17 17"><path d="M2,15 L15,2 M8,2 H15 V9 M2,8 V15 H9" fill="none" stroke="#222" stroke-width="1.3"/></svg></body></html>
